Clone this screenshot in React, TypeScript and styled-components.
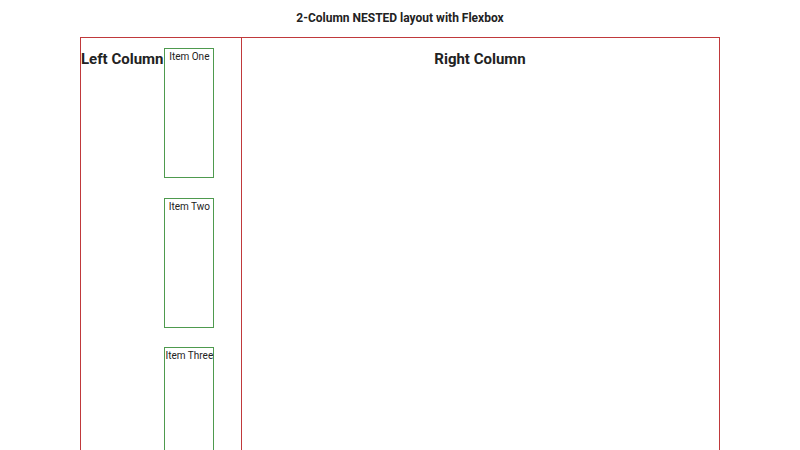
import React from "react";
import styled, { createGlobalStyle } from "styled-components";

const GlobalStyle = createGlobalStyle`
  html, body {
    margin: 0;
    height: 100%;
    overflow: hidden;
  }
  body {
    font-family: Roboto, "Liberation Sans", sans-serif;
    color: #222;
    background: #fff;
  }
`;

const Title = styled.h1`
  margin: 0;
  padding-top: 11px;
  height: 26px;
  font-size: 12px;
  line-height: 14px;
  font-weight: 700;
  text-align: center;
`;

const Container = styled.div`
  width: 638px;
  height: 460px;
  margin: 0 auto;
  display: flex;
  border: 1px solid #c0393b;
`;

const LeftColumn = styled.div`
  width: 160px;
  display: flex;
  align-items: flex-start;
  border-right: 1px solid #c0393b;
`;

const RightColumn = styled.div`
  flex: 1;
  text-align: center;
`;

const Heading = styled.h2`
  margin: 12px 0 0;
  padding-right: 1px;
  font-size: 15px;
  line-height: 18px;
  font-weight: 700;
  white-space: nowrap;
`;

const ItemList = styled.div`
  display: flex;
  flex-direction: column;
  gap: 19.5px;
  margin-top: 10px;
`;

const Item = styled.div`
  box-sizing: border-box;
  height: 130px;
  padding-top: 2px;
  border: 1px solid #4e9a4e;
  font-size: 10px;
  line-height: 12px;
  text-align: center;
  white-space: nowrap;
`;

const items = ["Item One", "Item Two", "Item Three"];

export default function App() {
  return (
    <>
      <GlobalStyle />
      <Title>2-Column NESTED layout with Flexbox</Title>
      <Container>
        <LeftColumn>
          <Heading>Left Column</Heading>
          <ItemList>
            {items.map(item => (
              <Item key={item}>{item}</Item>
            ))}
          </ItemList>
        </LeftColumn>
        <RightColumn>
          <Heading>Right Column</Heading>
        </RightColumn>
      </Container>
    </>
  );
}
